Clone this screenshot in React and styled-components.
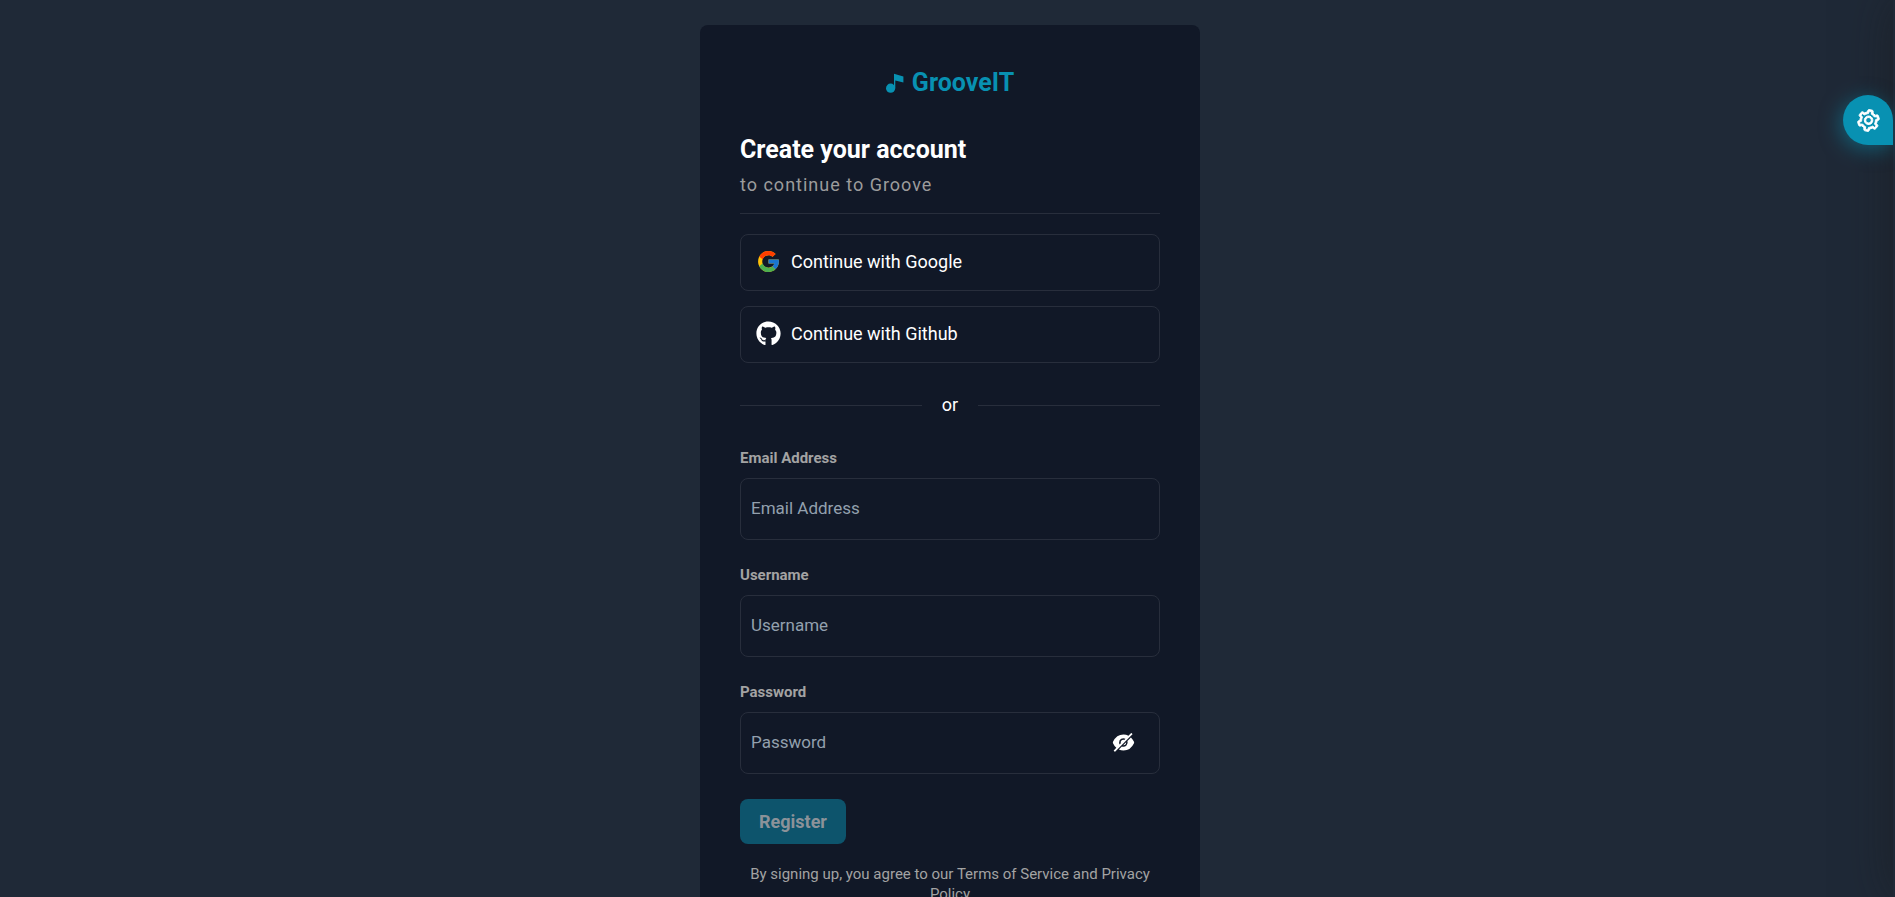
import React, { useState } from 'react';
import styled, { createGlobalStyle } from 'styled-components';
import { FcGoogle } from 'react-icons/fc';
import { FaGithub } from 'react-icons/fa';
import { AiFillEye, AiFillEyeInvisible, AiOutlineSetting } from 'react-icons/ai';

const GlobalStyle = createGlobalStyle`
  * {
    box-sizing: border-box;
  }

  body {
    margin: 0;
    background-color: #1f2937;
    color: white;
    font-family: Roboto, 'Open Sans', sans-serif;
    font-size: 18px;
    overflow-x: hidden;
  }

  button, input {
    font: inherit;
  }
`;

const Page = styled.main`
  display: flex;
  justify-content: center;
  min-height: 100vh;
  padding: 25px 0 25px 5px;
`;

const Card = styled.section`
  width: 100%;
  max-width: 500px;
  padding: 40px;
  border-radius: 8px;
  background-color: #111827;
`;

const Brand = styled.a`
  display: flex;
  align-items: center;
  justify-content: center;
  gap: 8px;
  color: #0891b2;
  font-size: 25px;
  font-weight: 700;
  line-height: 36px;
  text-decoration: none;
`;

const Header = styled.header`
  margin: 31px 0 20px;
  padding-bottom: 14px;
  border-bottom: 1px solid #282e3c;
`;

const Title = styled.h1`
  margin: 0 0 3px;
  font-size: 25px;
  font-weight: 700;
  line-height: 36px;
`;

const Subtitle = styled.p`
  margin: 0;
  color: #9c9c9c;
  letter-spacing: 1px;
  line-height: 28px;
`;

const Providers = styled.div`
  display: flex;
  flex-direction: column;
  gap: 15px;
`;

const ProviderButton = styled.button`
  display: flex;
  align-items: center;
  gap: 10px;
  height: 57px;
  padding: 0 15px 2px;
  border: 1px solid #282e3c;
  border-radius: 8px;
  background: none;
  color: white;
  cursor: pointer;
`;

const Separator = styled.div`
  display: flex;
  align-items: center;
  gap: 20px;
  margin: 30px 0;
  line-height: 24px;

  &::before,
  &::after {
    content: '';
    flex: 1;
    height: 1px;
    background-color: #282e3c;
  }
`;

const Form = styled.form`
  display: flex;
  flex-direction: column;
  gap: 24px;
`;

const FieldWrapper = styled.div`
  display: flex;
  flex-direction: column;
  gap: 8px;
`;

const Label = styled.label`
  color: #a3a3a3;
  font-size: 15px;
  font-weight: 700;
  line-height: 23px;
`;

const InputBox = styled.div`
  display: flex;
  align-items: center;
  height: 62px;
  padding-bottom: 2px;
  border: 1px solid #282e3c;
  border-radius: 8px;

  &:focus-within {
    border-color: #0891b2;
  }
`;

const Input = styled.input`
  flex: 1;
  min-width: 0;
  height: 100%;
  padding: 0 10px;
  border: none;
  outline: none;
  background: none;
  color: white;
  font-size: 17px;

  &::placeholder {
    color: #93a0ae;
    opacity: 1;
  }
`;

const ToggleButton = styled.button`
  display: flex;
  margin-right: 23px;
  padding: 0;
  border: none;
  background: none;
  color: white;
  cursor: pointer;
`;

const RegisterButton = styled.button`
  align-self: flex-start;
  height: 45px;
  margin-top: 1px;
  padding: 0 19px;
  border: none;
  border-radius: 8px;
  background-color: #0891b2;
  color: white;
  font-weight: 700;
  cursor: pointer;

  &:disabled {
    background-color: #0d546c;
    color: #8b9299;
    cursor: not-allowed;
  }
`;

const Terms = styled.p`
  margin: 20px 0 0;
  color: #a3a3a3;
  font-size: 15px;
  line-height: 20px;
  text-align: center;
`;

// closed panel: only its shadow and the round tab reach into the window
const SettingsPanel = styled.aside`
  position: fixed;
  top: 0;
  left: calc(100% - 2px);
  width: 300px;
  height: 100vh;
  background-color: #1f2937;
  box-shadow: 0 0 45px rgba(26, 26, 26, 0.5);
`;

const SettingsButton = styled.button`
  position: absolute;
  top: 95px;
  right: 100%;
  display: flex;
  align-items: center;
  justify-content: center;
  width: 50px;
  height: 50px;
  padding: 0;
  border: none;
  border-radius: 50% 50% 0 50%;
  background-color: #0891b2;
  box-shadow: -3px 4px 20px rgba(8, 145, 178, 0.5);
  color: white;
  cursor: pointer;

  svg {
    stroke-width: 36px;
    transform: rotate(12deg);
  }
`;

const MusicNote = () => (
  <svg width="18" height="20" viewBox="0 0 18 20" fill="currentColor" aria-hidden="true">
    <circle cx="4.6" cy="15.2" r="4.6" />
    <path d="M8 0.8 17.4 3.4V9.6L9.3 7.4V15H8Z" />
  </svg>
);

const Field = ( props ) => (
  <FieldWrapper>
    <Label htmlFor={props.id}>{props.label}</Label>
    <InputBox>
      <Input
        id={props.id}
        type={props.type || 'text'}
        placeholder={props.label}
        value={props.value}
        onChange={event => props.changed(props.id, event.target.value)} />
      {props.children}
    </InputBox>
  </FieldWrapper>
);

const App = () => {
  const [values, setValues] = useState({ email: '', username: '', password: '' });
  const [showPassword, setShowPassword] = useState(false);

  const changeHandler = (id, value) => {
    setValues({ ...values, [id]: value });
  };

  const isValid = values.email && values.username && values.password;

  return (
    <>
      <GlobalStyle />
      <Page>
        <Card>
          <Brand href="#">
            <MusicNote />
            GrooveIT
          </Brand>
          <Header>
            <Title>Create your account</Title>
            <Subtitle>to continue to Groove</Subtitle>
          </Header>
          <Providers>
            <ProviderButton type="button">
              <FcGoogle size={25} />
              Continue with Google
            </ProviderButton>
            <ProviderButton type="button">
              <FaGithub size={25} />
              Continue with Github
            </ProviderButton>
          </Providers>
          <Separator>or</Separator>
          <Form onSubmit={event => event.preventDefault()}>
            <Field id="email" label="Email Address" value={values.email} changed={changeHandler} />
            <Field id="username" label="Username" value={values.username} changed={changeHandler} />
            <Field
              id="password"
              label="Password"
              type={showPassword ? 'text' : 'password'}
              value={values.password}
              changed={changeHandler}>
              <ToggleButton
                type="button"
                aria-label="Toggle password visibility"
                onClick={() => setShowPassword(!showPassword)}>
                {showPassword ? <AiFillEye size={25} /> : <AiFillEyeInvisible size={25} />}
              </ToggleButton>
            </Field>
            <RegisterButton disabled={!isValid}>Register</RegisterButton>
          </Form>
          <Terms>By signing up, you agree to our Terms of Service and Privacy Policy</Terms>
        </Card>
      </Page>
      <SettingsPanel>
        <SettingsButton type="button" aria-label="Settings">
          <AiOutlineSetting size={25} />
        </SettingsButton>
      </SettingsPanel>
    </>
  );
};

export default App;
